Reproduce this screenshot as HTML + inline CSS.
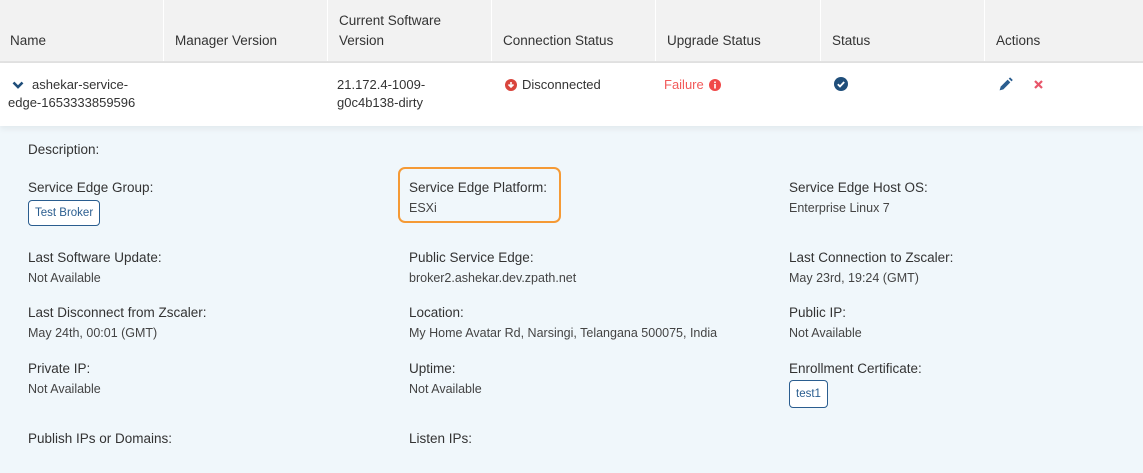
<!DOCTYPE html><html><head><style>
body{margin:0;width:1143px;height:473px;background:#f0f7fb;font-family:"Liberation Sans",sans-serif;color:#333;overflow:hidden;position:relative}
.hd{position:absolute;top:0;left:0;width:1143px;height:61px;background:#f2f2f2;border-bottom:2px solid #e2e2e2}
.hc{position:absolute;top:0;height:61px;border-left:1px solid #fff;font-size:13.5px;color:#333;display:flex;align-items:flex-end;padding-bottom:10px;box-sizing:border-box;line-height:20px}
.row{position:absolute;top:63px;left:0;width:1143px;height:63px;background:#fff;box-shadow:0 3px 6px rgba(0,0,0,.06)}
.t{position:absolute;font-size:13px;line-height:18px;color:#333}
.l{position:absolute;font-size:13.5px;color:#333}
.v{position:absolute;font-size:12.5px;color:#444}
.tag{position:absolute;border:1px solid #2a5d8f;border-radius:4px;font-size:11.5px;color:#2a5d8f;padding:0 6px;height:24px;line-height:24px;background:#fff}
</style></head><body>
<div class="hd">
<div class="hc" style="left:0;width:163px;padding-left:10px;border:0">Name</div>
<div class="hc" style="left:163px;width:164px;padding-left:11px">Manager Version</div>
<div class="hc" style="left:327px;width:164px;padding-left:11px">Current Software<br>Version</div>
<div class="hc" style="left:491px;width:164px;padding-left:11px">Connection Status</div>
<div class="hc" style="left:655px;width:165px;padding-left:11px">Upgrade Status</div>
<div class="hc" style="left:820px;width:164px;padding-left:11px">Status</div>
<div class="hc" style="left:984px;width:159px;padding-left:11px">Actions</div>
</div>
<div class="row">
<svg style="position:absolute;left:12px;top:17px" width="12" height="10" viewBox="0 0 12 10"><path d="M1.5 2.5 L6 7 L10.5 2.5" stroke="#1f4e7a" stroke-width="2.6" fill="none"/></svg>
<div class="t" style="left:8px;top:13px;width:155px;text-indent:24px">ashekar-service-<br>edge-1653333859596</div>
<div class="t" style="left:337px;top:13px">21.172.4-1009-<br>g0c4b138-dirty</div>
<svg style="position:absolute;left:505px;top:16px" width="12" height="12"><circle cx="6" cy="6" r="6" fill="#d9453d"/><path d="M6 3v5M3.5 5.5L6 8l2.5-2.5" stroke="#fff" stroke-width="1.6" fill="none"/></svg>
<div class="t" style="left:522px;top:13px">Disconnected</div>
<div class="t" style="left:664px;top:13px;color:#f25a5a">Failure</div>
<svg style="position:absolute;left:709px;top:16px" width="12" height="12"><circle cx="6" cy="6" r="6" fill="#f04848"/><rect x="5.2" y="2.5" width="1.6" height="1.6" fill="#fff"/><rect x="5.2" y="5" width="1.6" height="4.5" fill="#fff"/></svg>
<svg style="position:absolute;left:834px;top:14px" width="14" height="14"><circle cx="7" cy="7" r="7" fill="#1f4e7a"/><path d="M3.8 7.2l2.2 2.2 4.2-4.4" stroke="#fff" stroke-width="1.8" fill="none"/></svg>
<svg style="position:absolute;left:998px;top:14px" width="15" height="15" viewBox="0 0 14 14"><path d="M1.5 12.5l1-3.5 6.5-6.5 2.5 2.5L5 11.5z" fill="#2a5d8f"/><path d="M10 1.5l1.3-1.2 2.5 2.5-1.2 1.3z" fill="#2a5d8f"/></svg>
<svg style="position:absolute;left:1033px;top:16px" width="11" height="11"><path d="M2 2l7 7M9 2l-7 7" stroke="#e8566a" stroke-width="2.2"/></svg>
</div>
<div class="l" style="left:28px;top:142px">Description:</div>
<div class="l" style="left:28px;top:180px">Service Edge Group:</div>
<div class="tag" style="left:28px;top:200px">Test Broker</div>
<div style="position:absolute;left:398px;top:167px;width:163px;height:56px;border:2px solid #f59a35;border-radius:7px;box-sizing:border-box"></div>
<div class="l" style="left:409px;top:180px">Service Edge Platform:</div>
<div class="v" style="left:409px;top:201px">ESXi</div>
<div class="l" style="left:789px;top:180px">Service Edge Host OS:</div>
<div class="v" style="left:789px;top:201px">Enterprise Linux 7</div>
<div class="l" style="left:28px;top:250px">Last Software Update:</div>
<div class="v" style="left:28px;top:271px">Not Available</div>
<div class="l" style="left:409px;top:250px">Public Service Edge:</div>
<div class="v" style="left:409px;top:271px">broker2.ashekar.dev.zpath.net</div>
<div class="l" style="left:789px;top:250px">Last Connection to Zscaler:</div>
<div class="v" style="left:789px;top:271px">May 23rd, 19:24 (GMT)</div>
<div class="l" style="left:28px;top:305px">Last Disconnect from Zscaler:</div>
<div class="v" style="left:28px;top:326px">May 24th, 00:01 (GMT)</div>
<div class="l" style="left:409px;top:305px">Location:</div>
<div class="v" style="left:409px;top:326px">My Home Avatar Rd, Narsingi, Telangana 500075, India</div>
<div class="l" style="left:789px;top:305px">Public IP:</div>
<div class="v" style="left:789px;top:326px">Not Available</div>
<div class="l" style="left:28px;top:361px">Private IP:</div>
<div class="v" style="left:28px;top:382px">Not Available</div>
<div class="l" style="left:409px;top:361px">Uptime:</div>
<div class="v" style="left:409px;top:382px">Not Available</div>
<div class="l" style="left:789px;top:361px">Enrollment Certificate:</div>
<div class="tag" style="left:789px;top:380px;height:26px;line-height:26px">test1</div>
<div class="l" style="left:28px;top:431px">Publish IPs or Domains:</div>
<div class="l" style="left:409px;top:431px">Listen IPs:</div>
</body></html>
